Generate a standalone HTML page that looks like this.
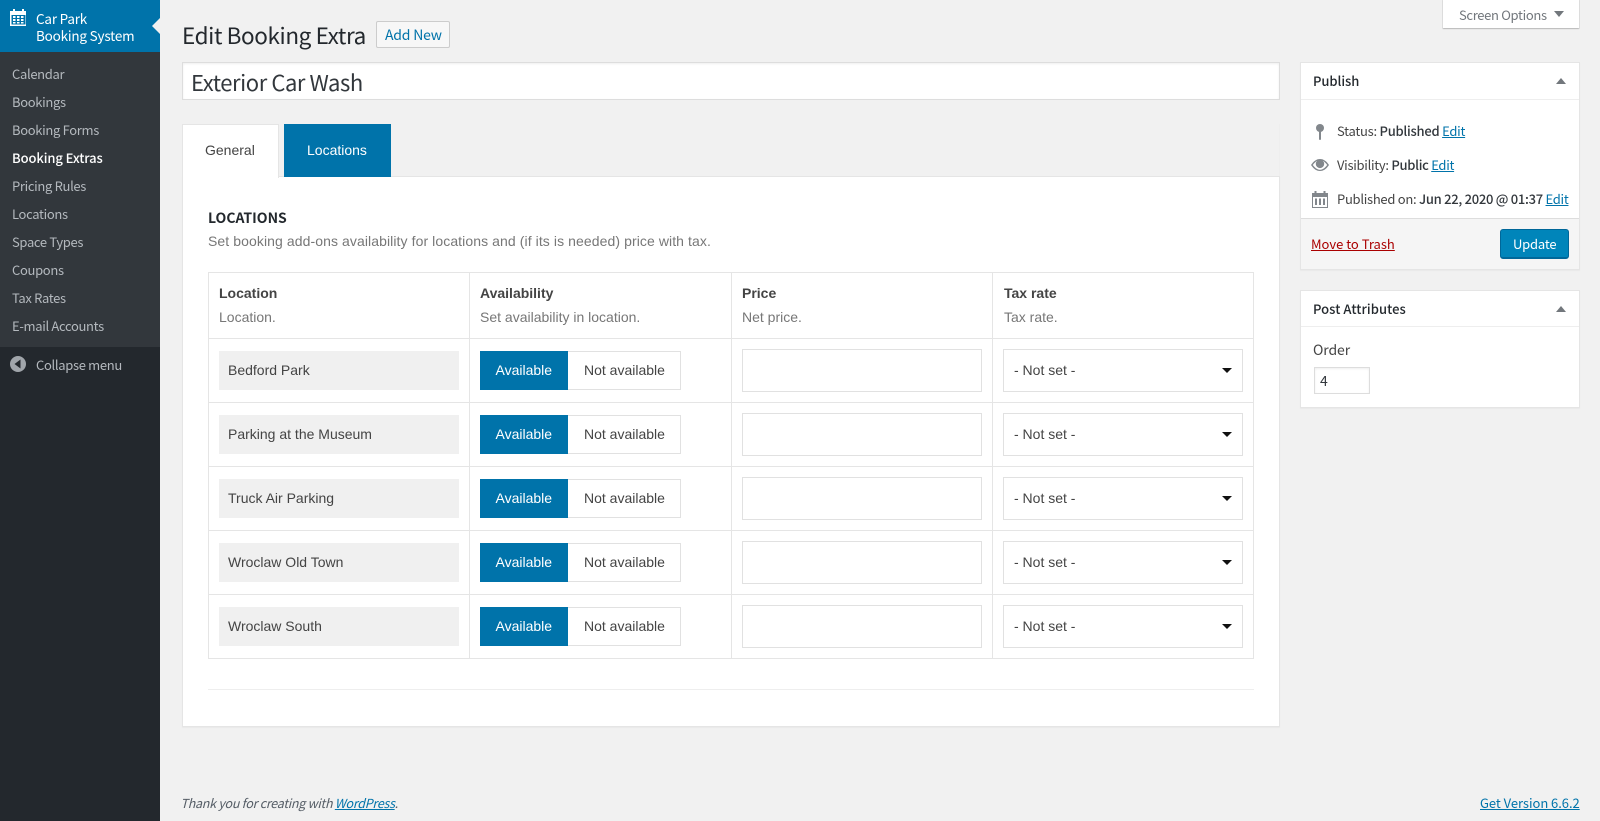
<!DOCTYPE html>
<html lang="en"><head><meta charset="utf-8"><title>Edit Booking Extra</title>
<style>
html,body{margin:0;padding:0;width:1600px;height:821px;overflow:hidden;background:#f1f1f1}
*{box-sizing:border-box}
.a{position:absolute}
.t{position:absolute;white-space:nowrap;font-family:"Noto Sans CJK JP","Liberation Sans",sans-serif;font-size:13px;letter-spacing:-.33px;line-height:20px;color:#444}
.l{position:absolute;white-space:nowrap;font-family:"Liberation Sans",Arial,sans-serif;font-size:14px;line-height:20px;color:#444}
.m{color:#b4b9be}
a{color:#0073aa;text-decoration:underline}
b{font-weight:500;color:#32373c}
</style></head><body>
<div class="a" style="left:0;top:0;width:160px;height:821px;background:#23282d"></div>
<div class="a" style="left:0;top:52px;width:160px;height:295px;background:#32373c"></div>
<div class="a" style="left:0;top:0;width:160px;height:52px;background:#0073aa"></div>
<div class="a" style="left:152px;top:18px;width:0;height:0;border:8px solid transparent;border-left:0;border-right-color:#f1f1f1"></div>
<svg class="a" style="left:10px;top:8px" width="17" height="18" viewBox="0 0 17 18"><path fill="#fff" d="M1 3h2V1h2v2h7V1h2v2h2v15H0V3zM1.500 7v9.500h14V7z"/><g fill="#fff"><rect x="3" y="8" width="2.500" height="2"/><rect x="7" y="8" width="2.500" height="2"/><rect x="11" y="8" width="2.500" height="2"/><rect x="3" y="11" width="2.500" height="2"/><rect x="7" y="11" width="2.500" height="2"/><rect x="11" y="11" width="2.500" height="2"/><rect x="3" y="14" width="2.500" height="1.500"/><rect x="7" y="14" width="2.500" height="1.500"/><rect x="11" y="14" width="2.500" height="1.500"/></g></svg>
<div class="t" style="left:36px;top:8px;color:#fff;font-size:13.5px;letter-spacing:-.2px">Car Park</div>
<div class="t" style="left:36px;top:25px;color:#fff;font-size:13.5px;letter-spacing:-.2px">Booking System</div>
<div class="t m" style="left:12px;top:64px">Calendar</div>
<div class="t m" style="left:12px;top:92px">Bookings</div>
<div class="t m" style="left:12px;top:120px">Booking Forms</div>
<div class="t" style="left:12px;top:148px;color:#fff;font-weight:500;letter-spacing:-.1px">Booking Extras</div>
<div class="t m" style="left:12px;top:176px">Pricing Rules</div>
<div class="t m" style="left:12px;top:204px">Locations</div>
<div class="t m" style="left:12px;top:232px">Space Types</div>
<div class="t m" style="left:12px;top:260px">Coupons</div>
<div class="t m" style="left:12px;top:288px">Tax Rates</div>
<div class="t m" style="left:12px;top:316px">E-mail Accounts</div>
<svg class="a" style="left:10px;top:356px" width="16" height="16" viewBox="0 0 16 16"><circle cx="8" cy="8" r="8" fill="#a0a5aa"/><path d="M10.500 3.500v9L4.500 8z" fill="#23282d"/></svg>
<div class="t m" style="left:36px;top:355px">Collapse menu</div>

<div class="t" style="left:182px;top:19px;font-size:22.500px;letter-spacing:-.4px;line-height:32px;color:#23282d">Edit Booking Extra</div>
<div class="a" style="left:376px;top:21px;width:74px;height:27px;border:1px solid #ccc;border-radius:2px;background:#f7f7f7"></div>
<div class="t" style="left:385px;top:25px;color:#0073aa;font-size:14px;letter-spacing:-.2px">Add New</div>
<div class="a" style="left:1443px;top:-1px;width:136px;height:29px;background:#fff;box-shadow:0 1px 1px rgba(0,0,0,.2),0 0 0 1px #e5e5e5"></div>
<div class="t" style="left:1459px;top:5px;color:#72777c">Screen Options</div>
<div class="a" style="left:1554px;top:11px;width:0;height:0;border:5px solid transparent;border-bottom:0;border-top:6px solid #72777c"></div>

<div class="a" style="left:182px;top:62px;width:1098px;height:38px;background:#fff;border:1px solid #ddd;box-shadow:inset 0 1px 2px rgba(0,0,0,.07)"></div>
<div class="t" style="left:191px;top:66px;font-size:22px;letter-spacing:-.42px;line-height:32px;color:#32373c">Exterior Car Wash</div>

<div class="a" style="left:1279px;top:124px;width:1px;height:52px;background:#eeeeee"></div>
<div class="a" style="left:182px;top:176px;width:1098px;height:551px;background:#fff;border:1px solid #e5e5e5;box-shadow:0 1px 1px rgba(0,0,0,.04)"></div>
<div class="a" style="left:182px;top:124px;width:97px;height:54px;background:#fff;border:1px solid #e5e5e5;border-bottom:0"></div>
<div class="l" style="left:205px;top:140px;color:#444">General</div>
<div class="a" style="left:284px;top:124px;width:107px;height:53px;background:#0073aa"></div>
<div class="l" style="left:307px;top:140px;color:#fff">Locations</div>

<div class="t" style="left:208px;top:208px;font-size:14px;letter-spacing:0;font-weight:700;color:#23282d">LOCATIONS</div>
<div class="l" style="left:208px;top:231px;color:#777;letter-spacing:.085px">Set booking add-ons availability for locations and (if its is needed) price with tax.</div>

<div class="a" style="left:208px;top:272px;width:1046px;height:387px;border:1px solid #e5e5e5"></div>
<div class="a" style="left:469px;top:272px;width:1px;height:387px;background:#e5e5e5"></div>
<div class="a" style="left:731px;top:272px;width:1px;height:387px;background:#e5e5e5"></div>
<div class="a" style="left:992px;top:272px;width:1px;height:387px;background:#e5e5e5"></div>
<div class="a" style="left:208px;top:338px;width:1046px;height:1px;background:#e5e5e5"></div>
<div class="a" style="left:208px;top:402px;width:1046px;height:1px;background:#e5e5e5"></div>
<div class="a" style="left:208px;top:466px;width:1046px;height:1px;background:#e5e5e5"></div>
<div class="a" style="left:208px;top:530px;width:1046px;height:1px;background:#e5e5e5"></div>
<div class="a" style="left:208px;top:594px;width:1046px;height:1px;background:#e5e5e5"></div>

<div class="l" style="left:219px;top:283px;font-weight:700">Location</div>
<div class="l" style="left:219px;top:307px;color:#777">Location.</div>
<div class="l" style="left:480px;top:283px;font-weight:700">Availability</div>
<div class="l" style="left:480px;top:307px;color:#777">Set availability in location.</div>
<div class="l" style="left:742px;top:283px;font-weight:700">Price</div>
<div class="l" style="left:742px;top:307px;color:#777">Net price.</div>
<div class="l" style="left:1004px;top:283px;font-weight:700">Tax rate</div>
<div class="l" style="left:1004px;top:307px;color:#777">Tax rate.</div>

<!-- row 1 -->
<div class="a" style="left:219px;top:351px;width:240px;height:39px;background:#f0f0f0"></div>
<div class="l" style="left:228px;top:360px">Bedford Park</div>
<div class="a" style="left:480px;top:351px;width:88px;height:39px;background:#0073aa"></div>
<div class="l" style="left:495.500px;top:360px;color:#fff">Available</div>
<div class="a" style="left:568px;top:351px;width:113px;height:39px;border:1px solid #e1e1e1;border-left:0"></div>
<div class="l" style="left:584px;top:360px">Not available</div>
<div class="a" style="left:742px;top:349px;width:240px;height:43px;border:1px solid #e1e1e1"></div>
<div class="a" style="left:1003px;top:349px;width:240px;height:43px;border:1px solid #e1e1e1"></div>
<div class="l" style="left:1014px;top:360px">- Not set -</div>
<div class="a" style="left:1222px;top:368px;width:0;height:0;border:5px solid transparent;border-bottom:0;border-top:5px solid #111"></div>
<!-- row 2 -->
<div class="a" style="left:219px;top:415px;width:240px;height:39px;background:#f0f0f0"></div>
<div class="l" style="left:228px;top:424px">Parking at the Museum</div>
<div class="a" style="left:480px;top:415px;width:88px;height:39px;background:#0073aa"></div>
<div class="l" style="left:495.500px;top:424px;color:#fff">Available</div>
<div class="a" style="left:568px;top:415px;width:113px;height:39px;border:1px solid #e1e1e1;border-left:0"></div>
<div class="l" style="left:584px;top:424px">Not available</div>
<div class="a" style="left:742px;top:413px;width:240px;height:43px;border:1px solid #e1e1e1"></div>
<div class="a" style="left:1003px;top:413px;width:240px;height:43px;border:1px solid #e1e1e1"></div>
<div class="l" style="left:1014px;top:424px">- Not set -</div>
<div class="a" style="left:1222px;top:432px;width:0;height:0;border:5px solid transparent;border-bottom:0;border-top:5px solid #111"></div>
<!-- row 3 -->
<div class="a" style="left:219px;top:479px;width:240px;height:39px;background:#f0f0f0"></div>
<div class="l" style="left:228px;top:488px">Truck Air Parking</div>
<div class="a" style="left:480px;top:479px;width:88px;height:39px;background:#0073aa"></div>
<div class="l" style="left:495.500px;top:488px;color:#fff">Available</div>
<div class="a" style="left:568px;top:479px;width:113px;height:39px;border:1px solid #e1e1e1;border-left:0"></div>
<div class="l" style="left:584px;top:488px">Not available</div>
<div class="a" style="left:742px;top:477px;width:240px;height:43px;border:1px solid #e1e1e1"></div>
<div class="a" style="left:1003px;top:477px;width:240px;height:43px;border:1px solid #e1e1e1"></div>
<div class="l" style="left:1014px;top:488px">- Not set -</div>
<div class="a" style="left:1222px;top:496px;width:0;height:0;border:5px solid transparent;border-bottom:0;border-top:5px solid #111"></div>
<!-- row 4 -->
<div class="a" style="left:219px;top:543px;width:240px;height:39px;background:#f0f0f0"></div>
<div class="l" style="left:228px;top:552px">Wroclaw Old Town</div>
<div class="a" style="left:480px;top:543px;width:88px;height:39px;background:#0073aa"></div>
<div class="l" style="left:495.500px;top:552px;color:#fff">Available</div>
<div class="a" style="left:568px;top:543px;width:113px;height:39px;border:1px solid #e1e1e1;border-left:0"></div>
<div class="l" style="left:584px;top:552px">Not available</div>
<div class="a" style="left:742px;top:541px;width:240px;height:43px;border:1px solid #e1e1e1"></div>
<div class="a" style="left:1003px;top:541px;width:240px;height:43px;border:1px solid #e1e1e1"></div>
<div class="l" style="left:1014px;top:552px">- Not set -</div>
<div class="a" style="left:1222px;top:560px;width:0;height:0;border:5px solid transparent;border-bottom:0;border-top:5px solid #111"></div>
<!-- row 5 -->
<div class="a" style="left:219px;top:607px;width:240px;height:39px;background:#f0f0f0"></div>
<div class="l" style="left:228px;top:616px">Wroclaw South</div>
<div class="a" style="left:480px;top:607px;width:88px;height:39px;background:#0073aa"></div>
<div class="l" style="left:495.500px;top:616px;color:#fff">Available</div>
<div class="a" style="left:568px;top:607px;width:113px;height:39px;border:1px solid #e1e1e1;border-left:0"></div>
<div class="l" style="left:584px;top:616px">Not available</div>
<div class="a" style="left:742px;top:605px;width:240px;height:43px;border:1px solid #e1e1e1"></div>
<div class="a" style="left:1003px;top:605px;width:240px;height:43px;border:1px solid #e1e1e1"></div>
<div class="l" style="left:1014px;top:616px">- Not set -</div>
<div class="a" style="left:1222px;top:624px;width:0;height:0;border:5px solid transparent;border-bottom:0;border-top:5px solid #111"></div>

<div class="a" style="left:208px;top:689px;width:1046px;height:1px;background:#eee"></div>

<!-- publish -->
<div class="a" style="left:1300px;top:62px;width:280px;height:208px;background:#fff;border:1px solid #e5e5e5;box-shadow:0 1px 1px rgba(0,0,0,.04)"></div>
<div class="a" style="left:1301px;top:99px;width:278px;height:1px;background:#eee"></div>
<div class="t" style="left:1313px;top:71px;font-weight:500;letter-spacing:-.05px;color:#23282d">Publish</div>
<div class="a" style="left:1556px;top:78px;width:0;height:0;border:5px solid transparent;border-top:0;border-bottom:6px solid #72777c"></div>
<svg class="a" style="left:1314px;top:123px" width="12" height="18" viewBox="0 0 12 18"><circle cx="6" cy="5" r="4" fill="#82878c"/><rect x="5" y="7" width="2" height="10" rx="1" fill="#82878c"/></svg>
<div class="t" style="left:1337px;top:121px;letter-spacing:-.25px">Status: <b>Published</b> <a href="#">Edit</a></div>
<svg class="a" style="left:1311px;top:158px" width="18" height="14" viewBox="0 0 18 14"><path d="M0 7C3 2.500 6 1 9 1s6 1.500 9 6c-3 4.500-6 6-9 6S3 11.500 0 7z" fill="#82878c"/><path d="M1.800 7C4.200 3.800 6 3 6 3a4.200 4.200 0 1 0 6 0s1.800.8 4.200 4c-2.500 3.300-5 4.800-7.200 4.800S4.300 10.300 1.800 7z" fill="#fff"/><circle cx="9" cy="6.400" r="3.400" fill="#82878c"/></svg>
<div class="t" style="left:1337px;top:155px;letter-spacing:-.29px">Visibility: <b>Public</b> <a href="#">Edit</a></div>
<svg class="a" style="left:1312px;top:190px" width="16" height="18" viewBox="0 0 16 18"><path fill="#82878c" d="M0 3h2.500V1h2v2h7V1h2v2H16v15H0zM1 7v10h14V7zM3 8.500h2V15H3zM7 8.500h2V15H7zM11 8.500h2V15h-2z"/></svg>
<div class="t" style="left:1337px;top:189px;letter-spacing:-.28px">Published on: <b>Jun 22, 2020 @ 01:37</b> <a href="#">Edit</a></div>
<div class="a" style="left:1301px;top:218px;width:278px;height:51px;background:#f5f5f5;border-top:1px solid #ddd"></div>
<div class="t" style="left:1311px;top:234px;color:#a00;letter-spacing:0"><a href="#" style="color:#a00">Move to Trash</a></div>
<div class="a" style="left:1500px;top:229px;width:69px;height:30px;background:#0085ba;border:1px solid #006799;border-bottom-width:2px;border-radius:3px"></div>
<div class="t" style="left:1513px;top:234px;color:#fff;letter-spacing:-.2px">Update</div>

<!-- attributes -->
<div class="a" style="left:1300px;top:290px;width:280px;height:118px;background:#fff;border:1px solid #e5e5e5;box-shadow:0 1px 1px rgba(0,0,0,.04)"></div>
<div class="a" style="left:1301px;top:326px;width:278px;height:1px;background:#eee"></div>
<div class="t" style="left:1313px;top:299px;font-weight:500;letter-spacing:.07px;color:#23282d">Post Attributes</div>
<div class="a" style="left:1556px;top:306px;width:0;height:0;border:5px solid transparent;border-top:0;border-bottom:6px solid #72777c"></div>
<div class="t" style="left:1313px;top:340px;font-size:14px;letter-spacing:-.1px">Order</div>
<div class="a" style="left:1314px;top:367px;width:56px;height:27px;background:#fff;border:1px solid #ddd;box-shadow:inset 0 1px 2px rgba(0,0,0,.07)"></div>
<div class="t" style="left:1320px;top:371px;color:#32373c;font-size:14px">4</div>

<!-- footer -->
<div class="t" style="left:180.500px;top:793px;font-size:12.500px;letter-spacing:-.27px;font-style:italic;color:#555d66">Thank you for creating with <a href="#">WordPress</a>.</div>
<div class="t" style="left:1480px;top:793px;letter-spacing:-.05px"><a href="#">Get Version 6.6.2</a></div>
</body></html>
